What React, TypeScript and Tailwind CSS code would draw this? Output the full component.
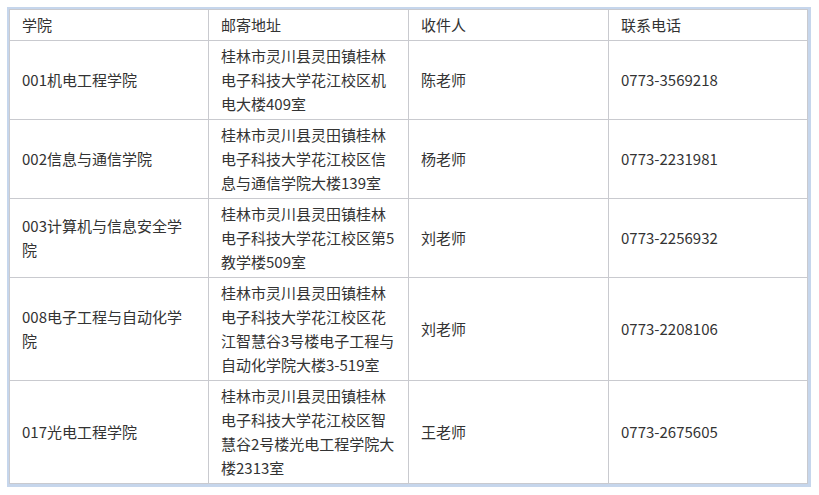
const rows = [
  {
    school: '001机电工程学院',
    address: '桂林市灵川县灵田镇桂林电子科技大学花江校区机电大楼409室',
    contact: '陈老师',
    phone: '0773-3569218',
  },
  {
    school: '002信息与通信学院',
    address: '桂林市灵川县灵田镇桂林电子科技大学花江校区信息与通信学院大楼139室',
    contact: '杨老师',
    phone: '0773-2231981',
  },
  {
    school: '003计算机与信息安全学院',
    address: '桂林市灵川县灵田镇桂林电子科技大学花江校区第5教学楼509室',
    contact: '刘老师',
    phone: '0773-2256932',
  },
  {
    school: '008电子工程与自动化学院',
    address: '桂林市灵川县灵田镇桂林电子科技大学花江校区花江智慧谷3号楼电子工程与自动化学院大楼3-519室',
    contact: '刘老师',
    phone: '0773-2208106',
  },
  {
    school: '017光电工程学院',
    address: '桂林市灵川县灵田镇桂林电子科技大学花江校区智慧谷2号楼光电工程学院大楼2313室',
    contact: '王老师',
    phone: '0773-2675605',
  },
];

const cell = 'border border-[#c9cacf] px-3 py-[3px] align-middle break-all';

const App = () => {
  return (
    <div className="min-h-[495px] bg-white pl-[7px] pt-[7px] font-['Noto_Sans_CJK_SC','Noto_Sans',sans-serif] text-[15px] leading-[24px] text-[#333]">
      <div className="inline-block border-2 border-r-[3px] border-b-[3px] border-[#c6d6ec]">
        <table className="w-[798px] table-fixed border-collapse">
          <colgroup>
            <col className="w-[199px]" />
            <col className="w-[200px]" />
            <col className="w-[200px]" />
            <col className="w-[199px]" />
          </colgroup>
          <thead>
            <tr>
              <th className={`${cell} text-left font-normal`}>学院</th>
              <th className={`${cell} text-left font-normal`}>邮寄地址</th>
              <th className={`${cell} text-left font-normal`}>收件人</th>
              <th className={`${cell} text-left font-normal`}>联系电话</th>
            </tr>
          </thead>
          <tbody>
            {rows.map((r) => (
              <tr key={r.school}>
                <td className={cell}>{r.school}</td>
                <td className={cell}>{r.address}</td>
                <td className={cell}>{r.contact}</td>
                <td className={cell}>{r.phone}</td>
              </tr>
            ))}
          </tbody>
        </table>
      </div>
    </div>
  );
};

export default App;
